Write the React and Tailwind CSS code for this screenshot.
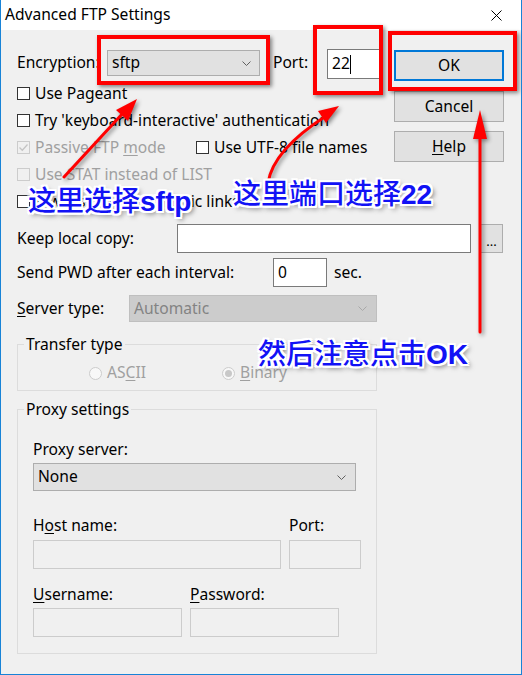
import React from 'react'

const ui = "font-['Noto_Sans',sans-serif]"

function Chevron({ color = '#606060' }) {
    return (
        <svg width="9" height="5" viewBox="0 0 9 5" className="shrink-0">
            <polyline points="0.5,0.5 4.5,4.5 8.5,0.5" fill="none" stroke={color} strokeWidth="1" />
        </svg>
    )
}

function Check({ checked, disabled }) {
    return (
        <span className={`w-[13px] h-[13px] shrink-0 border flex items-center justify-center ${disabled ? 'border-[#cccccc] bg-[#f0f0f0]' : 'border-[#333333] bg-white'}`}>
            {checked && (
                <svg width="11" height="11" viewBox="0 0 11 11">
                    <polyline points="1.5,5.5 4.3,8.3 9.5,2.5" fill="none" stroke={disabled ? '#c4c4c4' : '#000'} strokeWidth="1.3" />
                </svg>
            )}
        </span>
    )
}

function Radio({ checked }) {
    return (
        <span className="w-[13px] h-[13px] shrink-0 rounded-full border border-[#cccccc] bg-[#f8f8f8] flex items-center justify-center">
            {checked && <span className="w-[7px] h-[7px] rounded-full bg-[#c8c8c8]" />}
        </span>
    )
}

function CheckRow({ children, checked, disabled, className = '' }) {
    return (
        <div className={`flex items-center gap-[5px] ${disabled ? 'text-[#a0a0a0]' : ''} ${className}`}>
            <Check checked={checked} disabled={disabled} />
            <span className="leading-none">{children}</span>
        </div>
    )
}

function Note({ children, className }) {
    return (
        <div className={`absolute whitespace-nowrap text-[28px] leading-none text-[#1212f5] font-['Noto_Sans_CJK_SC',sans-serif] font-medium [text-shadow:2px_0_0_#fff,-2px_0_0_#fff,0_2px_0_#fff,0_-2px_0_#fff,2px_2px_0_#fff,-2px_-2px_0_#fff,2px_-2px_0_#fff,-2px_2px_0_#fff,3px_3px_5px_rgba(0,0,0,0.55)] ${className}`}>
            {children}
        </div>
    )
}

function Latin({ children }) {
    return <span className="font-['Liberation_Sans',sans-serif] font-bold">{children}</span>
}

export default function App() {
    return (
        <div className={`relative w-[522px] h-[675px] bg-[#f0f0f0] border-x border-b border-[#1883d7] text-[15.6px] text-black overflow-hidden ${ui}`}>
            {/* title bar */}
            <div className="h-[30px] bg-white flex items-center justify-between pl-[4px] pr-[19px]">
                <span className="leading-none">Advanced FTP Settings</span>
                <svg width="11" height="11" viewBox="0 0 11 11">
                    <path d="M0.5 0.5 L10.5 10.5 M10.5 0.5 L0.5 10.5" stroke="#000" strokeWidth="1" />
                </svg>
            </div>

            <div className="pl-[16px]">
                {/* upper block with the buttons column */}
                <div className="flex">
                    <div className="w-[363px] pt-[19px]">
                        <div className="flex items-center h-[30px]">
                            <span className="w-[90px] leading-none mt-[-2px]">Encryption:</span>
                            <div className="w-[153px] h-[26px] mt-[-2px] bg-[#e1e1e1] border border-[#adadad] flex items-center justify-between pl-[4px] pr-[8px]">
                                <span className="leading-none">sftp</span>
                                <Chevron />
                            </div>
                            <span className="ml-[13px] w-[54px] leading-none mt-[-2px]">Port:</span>
                            <div className="w-[53px] h-[30px] bg-white border border-[#7a7a7a] flex items-center pl-[4px]">
                                <span className="leading-none">22</span>
                                <span className="w-px h-[19px] bg-black" />
                            </div>
                        </div>
                        <CheckRow className="h-[27px] mt-[1px]">Use Pageant</CheckRow>
                        <CheckRow className="h-[27px]">Try 'keyboard-interactive' authentication</CheckRow>
                        <div className="flex items-center h-[27px]">
                            <CheckRow checked disabled className="w-[179px]">
                                Passive FTP <u className="underline-offset-2">m</u>ode
                            </CheckRow>
                            <CheckRow>Use UTF-8 file names</CheckRow>
                        </div>
                        <CheckRow disabled className="h-[27px]">Use STAT instead of LIST</CheckRow>
                        <CheckRow className="h-[27px]">Always follow symbolic links</CheckRow>
                    </div>

                    <div className="ml-[14px] w-[110px] pt-[20px] flex flex-col">
                        <button className="h-[31px] bg-[#e1e1e1] border-2 border-[#0078d7] leading-none">OK</button>
                        <button className="mt-[10px] h-[31px] bg-[#e1e1e1] border border-[#adadad] leading-none">Cancel</button>
                        <button className="mt-[9px] h-[31px] bg-[#e1e1e1] border border-[#adadad] leading-none">
                            <u className="underline-offset-2">H</u>elp
                        </button>
                    </div>
                </div>

                <div className="flex items-center mt-[9px]">
                    <span className="w-[160px] leading-none">Keep local copy:</span>
                    <div className="w-[294px] h-[29px] bg-white border border-[#7a7a7a]" />
                    <button className="ml-[9px] w-[23px] h-[29px] bg-[#e1e1e1] border border-[#adadad] leading-none text-[13px] pt-[6px]">...</button>
                </div>

                <div className="flex items-center mt-[5px]">
                    <span className="w-[256px] leading-none">Send PWD after each interval:</span>
                    <div className="w-[54px] h-[29px] bg-white border border-[#7a7a7a] flex items-center pl-[4px]">
                        <span className="leading-none">0</span>
                    </div>
                    <span className="ml-[7px] leading-none">sec.</span>
                </div>

                <div className="flex items-center mt-[8px]">
                    <span className="w-[112px] leading-none">
                        <u className="underline-offset-2">S</u>erver type:
                    </span>
                    <div className="w-[248px] h-[27px] bg-[#cccccc] border border-[#bfbfbf] flex items-center justify-between pl-[4px] pr-[9px] text-[#838383]">
                        <span className="leading-none">Automatic</span>
                        <Chevron color="#a8a8a8" />
                    </div>
                </div>

                <fieldset className="mt-[12px] w-[360px] border border-[#dcdcdc] pb-[7px]">
                    <legend className="ml-[6px] px-[2px] h-[20px] leading-[20px]">Transfer type</legend>
                    <div className="flex items-center h-[20px] mt-[9px] text-[#a0a0a0]">
                        <div className="flex items-center gap-[5px] ml-[71px] w-[133px]">
                            <Radio />
                            <span className="leading-none">AS<u className="underline-offset-2">C</u>II</span>
                        </div>
                        <div className="flex items-center gap-[5px]">
                            <Radio checked />
                            <span className="leading-none"><u className="underline-offset-2">B</u>inary</span>
                        </div>
                    </div>
                </fieldset>

                <fieldset className="mt-[8px] w-[360px] border border-[#dcdcdc] px-[15px] pb-[16px]">
                    <legend className="ml-[-9px] px-[2px] h-[20px] leading-[20px]">Proxy settings</legend>
                    <div className="h-[20px] leading-[20px] mt-[20px]">Proxy server:</div>
                    <div className="mt-[4px] w-[323px] h-[28px] bg-[#e1e1e1] border border-[#adadad] flex items-center justify-between pl-[4px] pr-[9px]">
                        <span className="leading-none">None</span>
                        <Chevron />
                    </div>
                    <div className="flex h-[20px] leading-[20px] mt-[24px]">
                        <span className="w-[256px]">H<u className="underline-offset-2">o</u>st name:</span>
                        <span>Port:</span>
                    </div>
                    <div className="flex mt-[5px]">
                        <div className="w-[248px] h-[29px] bg-[#f0f0f0] border border-[#cccccc]" />
                        <div className="ml-[8px] w-[72px] h-[29px] bg-[#f0f0f0] border border-[#cccccc]" />
                    </div>
                    <div className="flex h-[20px] leading-[20px] mt-[15px]">
                        <span className="w-[157px]"><u className="underline-offset-2">U</u>sername:</span>
                        <span><u className="underline-offset-2">P</u>assword:</span>
                    </div>
                    <div className="flex mt-[4px]">
                        <div className="w-[149px] h-[29px] bg-[#f0f0f0] border border-[#cccccc]" />
                        <div className="ml-[8px] w-[149px] h-[29px] bg-[#f0f0f0] border border-[#cccccc]" />
                    </div>
                </fieldset>
            </div>

            {/* red highlight boxes */}
            <div className="absolute left-[96px] top-[35px] w-[173px] h-[50px] border-[4px] border-[#ff0000] shadow-[2px_2px_4px_rgba(0,0,0,0.45)]" />
            <div className="absolute left-[312px] top-[25px] w-[70px] h-[70px] border-[4px] border-[#ff0000] shadow-[2px_2px_4px_rgba(0,0,0,0.45)]" />
            <div className="absolute left-[387px] top-[31px] w-[129px] h-[60px] border-[4px] border-[#ff0000] shadow-[2px_2px_4px_rgba(0,0,0,0.45)]" />

            {/* arrows */}
            <svg className="absolute left-0 top-0 pointer-events-none drop-shadow-[2px_2px_2px_rgba(0,0,0,0.45)]" width="522" height="675" viewBox="0 0 522 675">
                <line x1="63" y1="177" x2="123" y2="112" stroke="#ff0000" strokeWidth="3" strokeLinecap="round" />
                <polygon points="136,99 127,121 115,110" fill="#ff0000" />
                <path d="M267 183 Q272 150 325 116" fill="none" stroke="#ff0000" strokeWidth="3" strokeLinecap="round" />
                <polygon points="338,106 325,123 317,111" fill="#ff0000" />
                <line x1="479" y1="332" x2="479" y2="134" stroke="#ff0000" strokeWidth="3" strokeLinecap="round" />
                <polygon points="479,110 486,139 472,139" fill="#ff0000" />
            </svg>

            {/* notes */}
            <Note className="left-[27px] top-[185px]">这里选择<Latin>sftp</Latin></Note>
            <Note className="left-[232px] top-[178px]">这里端口选择<Latin>22</Latin></Note>
            <Note className="left-[257px] top-[338px]">然后注意点击<Latin>OK</Latin></Note>
        </div>
    )
}
